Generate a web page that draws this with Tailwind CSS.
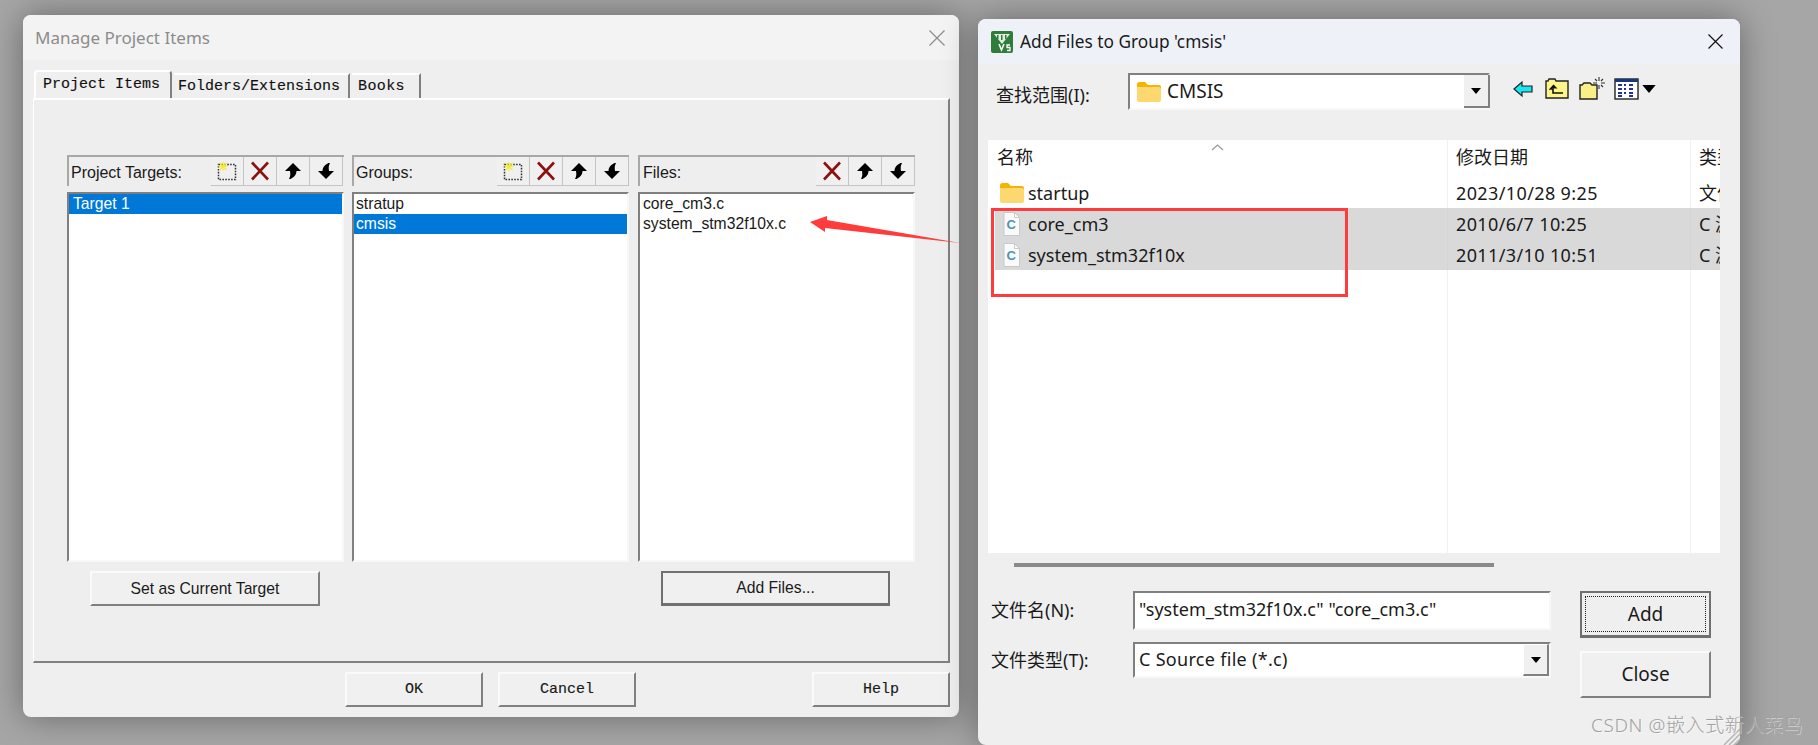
<!DOCTYPE html>
<html lang="en">
<head>
  <meta charset="UTF-8" />
  <title>Manage Project Items</title>
  <script src="https://cdn.jsdelivr.net/npm/@tailwindcss/browser@4"></script>
</head>
<body class="relative w-[1818px] h-[745px] overflow-hidden bg-[#a6a6a6] font-['Liberation_Sans',sans-serif] text-[#1a1a1a]">

  <svg class="hidden" xmlns="http://www.w3.org/2000/svg">
    <symbol id="ico-new" viewBox="0 0 20 20">
      <rect x="1.500" y="3.500" width="17" height="15" fill="none" stroke="#333" stroke-width="1.500" stroke-dasharray="1.600 1.300"/>
      <path d="M6 1v9M1.500 5.500h9M2.500 2l7 7M9.500 2l-7 7" stroke="#f4ec2c" stroke-width="1.100"/>
    </symbol>
    <symbol id="ico-del" viewBox="0 0 20 20">
      <path d="M2 1.500L18 18.500M18 1.500L2 18.500" stroke="#8b1010" stroke-width="2.600"/>
    </symbol>
    <symbol id="ico-up" viewBox="0 0 18 18">
      <path d="M9 1L17 9H12.500C12.500 12.500 10 15.500 6.500 17H5C6.500 14.500 6.500 12 6 9H1Z" fill="#000"/>
    </symbol>
    <symbol id="ico-down" viewBox="0 0 18 18">
      <path d="M9 17L1 9H5.500C5.500 5.500 8 2.500 11.500 1H13C11.500 3.500 11.500 6 12 9H17Z" fill="#000"/>
    </symbol>
    <symbol id="ico-folder" viewBox="0 0 24 20">
      <path d="M0 2.500Q0 0 2.500 0H8L11 3H22Q24 3 24 5V8H0Z" fill="#f4b400"/>
      <path d="M0 5H22Q24 5 24 7V18Q24 20 22 20H2Q0 20 0 18Z" fill="#fdd871"/>
    </symbol>
    <symbol id="ico-cfile" viewBox="0 0 17 24">
      <path d="M1 .5H11.500L16.500 5.500V23.500H1Z" fill="#fafafa" stroke="#c9c9c9"/>
      <path d="M11.500 .5V5.500H16.500" fill="none" stroke="#c9c9c9"/>
      <text x="3.500" y="17" font-family="Liberation Sans" font-size="13" font-weight="bold" fill="#4d93b5">C</text>
    </symbol>
    <symbol id="ico-drop" viewBox="0 0 10 6">
      <path d="M0 0H10L5 6Z" fill="#000"/>
    </symbol>
  </svg>

  <!-- Manage Project Items dialog -->
  <div class="absolute left-[23px] top-[15px] w-[936px] h-[702px] rounded-lg bg-[#efefef] shadow-[0_0_34px_rgba(0,0,0,0.38)] flex flex-col">
    <div class="h-[45px] shrink-0 rounded-t-lg bg-[#f3f3f3] flex items-center justify-between pl-[12px] pr-[14px]">
      <span class="font-['Noto_Sans',sans-serif] text-[17px] text-[#8c8c8c]">Manage Project Items</span>
      <svg width="16" height="16" viewBox="0 0 16 16"><path d="M.5 .5L15.500 15.500M15.500 .5L.5 15.500" stroke="#8c8c8c" stroke-width="1.200"/></svg>
    </div>

    <!-- tabs -->
    <div class="flex items-end h-[28px] mt-[10px] ml-[11px] font-['Liberation_Mono',monospace] text-[15px] text-[#111] [-webkit-text-stroke:0.15px_#111]">
      <div class="h-[28px] w-[138px] pl-[7px] pt-[3px] border-t-2 border-l-2 border-white border-r-2 border-r-[#808080] rounded-t-sm leading-[20px]">Project Items</div>
      <div class="h-[25px] w-[176px] ml-[2px] pl-[4px] pt-[1px] border-t-2 border-white border-r-2 border-r-[#808080] leading-[22px]">Folders/Extensions</div>
      <div class="h-[25px] w-[69px] ml-[2px] pl-[6px] pt-[1px] border-t-2 border-white border-r-2 border-r-[#808080] leading-[22px] tracking-[0.4px]">Books</div>
    </div>

    <!-- tab panel -->
    <div class="w-[917px] h-[565px] ml-[10px] shrink-0 border-t-2 border-l border-white border-r-2 border-b-2 border-r-[#808080] border-b-[#808080] bg-[#eeeeee] pl-[33px] pt-[55px] flex gap-[8px]">

      <div class="w-[277px]">
        <div class="h-[31px] flex items-center justify-between border-t-2 border-l-2 border-[#a8a8a8] pl-[2px] text-[16px]">
          <span class="pt-[2px]">Project Targets:</span>
          <div class="flex pr-[1px]">
            <div class="w-[33px] h-[29px] flex items-center justify-center bg-[#f0f0f0] border-r border-b border-[#c4c4c4]"><svg width="20" height="20"><use href="#ico-new"/></svg></div>
            <div class="w-[33px] h-[29px] flex items-center justify-center bg-[#f0f0f0] border-r border-b border-[#c4c4c4]"><svg width="20" height="20"><use href="#ico-del"/></svg></div>
            <div class="w-[33px] h-[29px] flex items-center justify-center bg-[#f0f0f0] border-r border-b border-[#c4c4c4]"><svg width="18" height="18"><use href="#ico-up"/></svg></div>
            <div class="w-[33px] h-[29px] flex items-center justify-center bg-[#f0f0f0] border-r border-b border-[#c4c4c4]"><svg width="18" height="18"><use href="#ico-down"/></svg></div>
          </div>
        </div>
        <div class="h-[370px] mt-[6px] bg-white border-t-2 border-l-2 border-[#808080] border-r-2 border-b-2 border-r-[#f8f8f8] border-b-[#f8f8f8] text-[15.700px] leading-[20px]">
          <div class="h-[20px] bg-[#0078d7] text-white pl-[4px]">Target 1</div>
        </div>
        <div class="w-[230px] h-[35px] mt-[9px] ml-[23px] flex items-center justify-center text-[15.700px] bg-[#f0f0f0] border-t-2 border-l-2 border-[#fafafa] border-r-2 border-b-2 border-r-[#808080] border-b-[#808080]">Set as Current Target</div>
      </div>

      <div class="w-[277px]">
        <div class="h-[31px] flex items-center justify-between border-t-2 border-l-2 border-[#a8a8a8] pl-[2px] text-[16px]">
          <span class="pt-[2px]">Groups:</span>
          <div class="flex">
            <div class="w-[33px] h-[29px] flex items-center justify-center bg-[#f0f0f0] border-r border-b border-[#c4c4c4]"><svg width="20" height="20"><use href="#ico-new"/></svg></div>
            <div class="w-[33px] h-[29px] flex items-center justify-center bg-[#f0f0f0] border-r border-b border-[#c4c4c4]"><svg width="20" height="20"><use href="#ico-del"/></svg></div>
            <div class="w-[33px] h-[29px] flex items-center justify-center bg-[#f0f0f0] border-r border-b border-[#c4c4c4]"><svg width="18" height="18"><use href="#ico-up"/></svg></div>
            <div class="w-[33px] h-[29px] flex items-center justify-center bg-[#f0f0f0] border-r border-b border-[#c4c4c4]"><svg width="18" height="18"><use href="#ico-down"/></svg></div>
          </div>
        </div>
        <div class="h-[370px] mt-[6px] bg-white border-t-2 border-l-2 border-[#808080] border-r-2 border-b-2 border-r-[#f8f8f8] border-b-[#f8f8f8] text-[15.700px] leading-[20px]">
          <div class="h-[20px] pl-[2px]">stratup</div>
          <div class="h-[20px] bg-[#0078d7] text-white pl-[2px]">cmsis</div>
        </div>
      </div>

      <div class="w-[277px] ml-[1px]">
        <div class="h-[31px] flex items-center justify-between border-t-2 border-l-2 border-[#a8a8a8] pl-[3px] text-[16px]">
          <span class="pt-[2px]">Files:</span>
          <div class="flex">
            <div class="w-[33px] h-[29px] flex items-center justify-center bg-[#f0f0f0] border-r border-b border-[#c4c4c4]"><svg width="20" height="20"><use href="#ico-del"/></svg></div>
            <div class="w-[33px] h-[29px] flex items-center justify-center bg-[#f0f0f0] border-r border-b border-[#c4c4c4]"><svg width="18" height="18"><use href="#ico-up"/></svg></div>
            <div class="w-[33px] h-[29px] flex items-center justify-center bg-[#f0f0f0] border-r border-b border-[#c4c4c4]"><svg width="18" height="18"><use href="#ico-down"/></svg></div>
          </div>
        </div>
        <div class="h-[370px] mt-[6px] bg-white border-t-2 border-l-2 border-[#808080] border-r-2 border-b-2 border-r-[#f8f8f8] border-b-[#f8f8f8] text-[15.700px] leading-[20px]">
          <div class="h-[20px] pl-[3px]">core_cm3.c</div>
          <div class="h-[20px] pl-[3px]">system_stm32f10x.c</div>
        </div>
        <div class="w-[229px] h-[35px] mt-[9px] ml-[23px] flex items-center justify-center text-[15.700px] bg-[#f0f0f0] border-2 border-[#707070] border-b-[3px]">Add Files...</div>
      </div>
    </div>

    <!-- OK / Cancel / Help -->
    <div class="flex gap-[15px] mt-[9px] pl-[322px] pr-[9px] font-['Liberation_Mono',monospace] text-[15px] [-webkit-text-stroke:0.15px_#111]">
      <div class="w-[138px] h-[35px] pt-[2px] flex items-center justify-center bg-[#f0f0f0] border-t-2 border-l-2 border-[#fafafa] border-r-2 border-b-2 border-r-[#808080] border-b-[#808080]">OK</div>
      <div class="w-[138px] h-[35px] pt-[2px] flex items-center justify-center bg-[#f0f0f0] border-t-2 border-l-2 border-[#fafafa] border-r-2 border-b-2 border-r-[#808080] border-b-[#808080]">Cancel</div>
      <div class="w-[138px] h-[35px] pt-[2px] ml-auto flex items-center justify-center bg-[#f0f0f0] border-t-2 border-l-2 border-[#fafafa] border-r-2 border-b-2 border-r-[#808080] border-b-[#808080]">Help</div>
    </div>
  </div>

  <!-- Add Files dialog -->
  <div class="absolute left-[978px] top-[19px] w-[762px] h-[726px] rounded-lg bg-[#efefef] shadow-[0_0_34px_rgba(0,0,0,0.38)] font-['Noto_Sans','Noto_Sans_CJK_SC',sans-serif] flex flex-col">
    <div class="h-[45px] shrink-0 rounded-t-lg bg-[#eef2f8] flex items-center pl-[13px] pr-[18px]">
      <svg width="22" height="22" viewBox="0 0 22 22">
        <rect width="22" height="22" rx="2" fill="#2f7d3b"/>
        <path d="M3 3H19L11 13Z" fill="#dfeedd"/>
        <path d="M6 4h1.500v4H6M10 4h1.500v5H10M14 4h1.500v4H14" fill="#2f7d3b"/>
        <path d="M8 13l2.500 6 2.500-6" fill="none" stroke="#fff" stroke-width="1.500"/>
        <path d="M19 14h-3v2.500h3v3h-3" fill="none" stroke="#fff" stroke-width="1.300"/>
      </svg>
      <span class="ml-[7px] text-[17.300px]">Add Files to Group 'cmsis'</span>
      <svg class="ml-auto mr-[-1px]" width="15" height="15" viewBox="0 0 15 15"><path d="M.5 .5L14.500 14.500M14.500 .5L.5 14.500" stroke="#111" stroke-width="1.200"/></svg>
    </div>

    <!-- look-in row -->
    <div class="flex h-[37px] mt-[9px] shrink-0">
      <span class="w-[150px] pl-[18px] pt-[10px] text-[18px] leading-[24px] whitespace-nowrap">查找范围(I):</span>
      <div class="w-[362px] h-[37px] flex items-center bg-white border-t-2 border-l-2 border-[#808080] border-r-2 border-b-2 border-r-[#f8f8f8] border-b-[#f8f8f8] pl-[7px]">
        <svg width="24" height="20"><use href="#ico-folder"/></svg>
        <span class="ml-[6px] text-[19px]">CMSIS</span>
        <div class="ml-auto mr-[-2px] w-[26px] h-[33px] flex items-center justify-center bg-[#f0f0f0] border-r-2 border-b-2 border-[#808080]"><svg width="10" height="6"><use href="#ico-drop"/></svg></div>
      </div>
      <!-- toolbar icons -->
      <div class="flex items-start ml-[23px] pt-[7px]">
        <svg width="20" height="18" viewBox="0 0 20 18"><path d="M1 9L9 2V6H19V12H9V16Z" fill="#19e6f0" stroke="#222" stroke-width="1.200"/></svg>
        <svg class="ml-[12px] -mt-[2px]" width="24" height="21" viewBox="0 0 24 21"><path d="M1 20V3H3L4 1H10L11 3H23V20Z" fill="#fdf58a" stroke="#222" stroke-width="1.400"/><path d="M9 7L5.500 11H8V15H18" fill="none" stroke="#111" stroke-width="1.600"/><path d="M5.500 10.500H12.500L9 7Z" fill="#111"/></svg>
        <svg class="ml-[10px] -mt-[3px]" width="26" height="23" viewBox="0 0 26 23"><path d="M1 22V8H3L5 6H11L13 8H18V22Z" fill="#f9ef87" stroke="#222" stroke-width="1.400"/><path d="M20 0v4M20 8v4M14 6h4M22 6h4M16 2l2 2M24 2l-2 2M24 10l-2-2" stroke="#333" stroke-width="1.100"/></svg>
        <svg class="ml-[9px] -mt-[2px]" width="25" height="22" viewBox="0 0 25 22"><rect x="1" y="1" width="23" height="20" fill="#fff" stroke="#222" stroke-width="1.400"/><rect x="1" y="1" width="23" height="3" fill="#17377e"/><path d="M4 7h4M10 7h2M15 7h4M4 11h4M10 11h2M15 11h4M4 15h4M10 15h2M15 15h4M4 18h4M15 18h4" stroke="#23309c" stroke-width="1.800"/></svg>
        <svg class="ml-[3px] mt-[5px]" width="14" height="8"><use href="#ico-drop"/></svg>
      </div>
    </div>

    <!-- file list -->
    <div class="w-[732px] h-[413px] mt-[30px] ml-[10px] shrink-0 bg-white flex flex-col overflow-hidden text-[18px] leading-[24px]">
      <div class="grid grid-cols-[459px_243px_30px] h-[37px] shrink-0 relative">
        <div class="pl-[9px] pt-[5px]">名称</div>
        <div class="pl-[8px] pt-[5px] border-l border-[#eef2f8]">修改日期</div>
        <div class="pl-[8px] pt-[5px] border-l border-[#eef2f8] overflow-hidden whitespace-nowrap">类型</div>
        <svg class="absolute left-[223px] top-[4px]" width="13" height="7" viewBox="0 0 13 7"><path d="M1 6L6.500 1L12 6" fill="none" stroke="#999" stroke-width="1.200"/></svg>
      </div>
      <div class="grid grid-cols-[459px_243px_30px] h-[31px] shrink-0 items-stretch">
        <div class="flex items-center pl-[12px]"><svg width="24" height="20"><use href="#ico-folder"/></svg><span class="ml-[4px]">startup</span></div>
        <div class="flex items-center pl-[8px] border-l border-[#eef2f8] tracking-[0.38px]">2023/10/28 9:25</div>
        <div class="flex items-center pl-[8px] border-l border-[#eef2f8] overflow-hidden whitespace-nowrap">文件夹</div>
      </div>
      <div class="grid grid-cols-[452px_243px_30px] ml-[7px] h-[31px] shrink-0 items-stretch bg-[#d9d9d9]">
        <div class="flex items-center pl-[8px]"><svg width="17" height="24"><use href="#ico-cfile"/></svg><span class="ml-[8px]">core_cm3</span></div>
        <div class="flex items-center pl-[8px] border-l border-[#d2d6dc] tracking-[0.38px]">2010/6/7 10:25</div>
        <div class="flex items-center pl-[8px] border-l border-[#d2d6dc] overflow-hidden whitespace-nowrap">C 源文件</div>
      </div>
      <div class="grid grid-cols-[452px_243px_30px] ml-[7px] h-[31px] shrink-0 items-stretch bg-[#d9d9d9]">
        <div class="flex items-center pl-[8px]"><svg width="17" height="24"><use href="#ico-cfile"/></svg><span class="ml-[8px]">system_stm32f10x</span></div>
        <div class="flex items-center pl-[8px] border-l border-[#d2d6dc] tracking-[0.38px]">2011/3/10 10:51</div>
        <div class="flex items-center pl-[8px] border-l border-[#d2d6dc] overflow-hidden whitespace-nowrap">C 源文件</div>
      </div>
      <div class="grid grid-cols-[459px_243px_30px] flex-1">
        <div></div>
        <div class="border-l border-[#eef2f8]"></div>
        <div class="border-l border-[#eef2f8]"></div>
      </div>
    </div>

    <!-- scrollbar -->
    <div class="w-[480px] h-[4px] mt-[10px] ml-[36px] shrink-0 bg-[#8a8a8a]"></div>

    <!-- name / type + buttons -->
    <div class="flex mt-[24px]">
      <div class="w-[602px]">
        <div class="flex h-[39px]">
          <span class="w-[155px] pl-[13px] text-[18px] leading-[38px]">文件名(N):</span>
          <div class="w-[418px] bg-white border-t-2 border-l-2 border-[#808080] border-r-2 border-b-2 border-r-[#f8f8f8] border-b-[#f8f8f8] pl-[4px] text-[18px] leading-[33px] whitespace-nowrap">"system_stm32f10x.c" "core_cm3.c"</div>
        </div>
        <div class="flex h-[36px] mt-[12px]">
          <span class="w-[155px] pl-[13px] text-[18px] leading-[36px]">文件类型(T):</span>
          <div class="w-[418px] flex bg-white border-t-2 border-l-2 border-[#808080] border-r-2 border-b-2 border-r-[#f8f8f8] border-b-[#f8f8f8] pl-[4px] text-[18px] tracking-[0.3px] leading-[30px]">
            <span>C Source file (*.c)</span>
            <div class="ml-auto w-[26px] h-[32px] flex items-center justify-center bg-[#f0f0f0] border-t border-l border-white border-r-2 border-b-2 border-r-[#808080] border-b-[#808080]"><svg width="10" height="6"><use href="#ico-drop"/></svg></div>
          </div>
        </div>
      </div>
      <div class="w-[131px] text-[19px]">
        <div class="h-[47px] p-[3px] bg-[#efefef] border-2 border-[#707070] border-b-[3px]">
          <div class="h-full flex items-center justify-center border border-dotted border-[#222]">Add</div>
        </div>
        <div class="h-[47px] mt-[13px] flex items-center justify-center bg-[#f0f0f0] border-t-2 border-l-2 border-[#fafafa] border-r-2 border-b-2 border-r-[#808080] border-b-[#808080]">Close</div>
      </div>
    </div>
  </div>

  <!-- annotations drawn over the screenshot -->
  <div class="absolute left-[991px] top-[208px] w-[357px] h-[89px] border-[3px] border-[#ff3b3b]"></div>
  <svg class="absolute left-[805px] top-[210px]" width="160" height="40" viewBox="805 210 160 40">
    <path d="M810 222L827 216L827 220L960 243L825 228L825 232Z" fill="#ff3b3b"/>
  </svg>

  <!-- resize grip + watermark -->
  <svg class="absolute left-[1722px] top-[728px]" width="18" height="17" viewBox="0 0 18 17"><path d="M2 17L18 1M7 17L18 6M12 17L18 11" stroke="#b5b5b5" stroke-width="1.500"/></svg>
  <div class="absolute left-[1591px] top-[712px] font-['Noto_Sans','Noto_Sans_CJK_SC',sans-serif] text-[19px] font-light leading-[26px] tracking-[0.6px] whitespace-nowrap text-[#a0a0a0] [text-shadow:1px_1px_0_rgba(255,255,255,0.45)]">CSDN @嵌入式新人菜鸟</div>
</body>
</html>
